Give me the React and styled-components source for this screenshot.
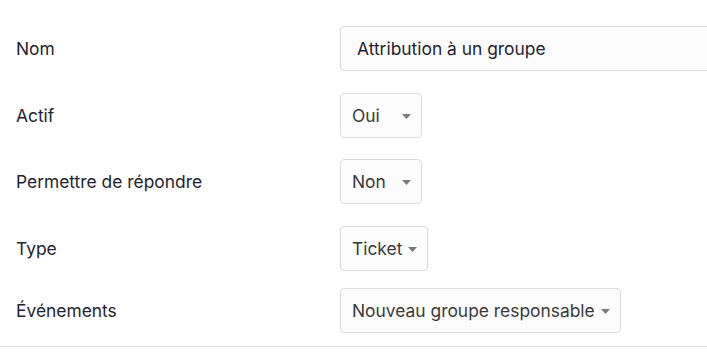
import React from "react"
import styled, { createGlobalStyle } from "styled-components"

const GlobalStyle = createGlobalStyle`
  body {
    margin: 0;
    background: #ffffff;
    font-family: Inter, "Noto Sans", sans-serif;
  }
`

const fields = [
  { label: "Nom", kind: "input", value: "Attribution à un groupe" },
  { label: "Actif", kind: "select", value: "Oui" },
  { label: "Permettre de répondre", kind: "select", value: "Non" },
  { label: "Type", kind: "select", value: "Ticket", tight: true },
  { label: "Événements", kind: "select", value: "Nouveau groupe responsable" },
]

const Caret = () => (
  <svg width="9" height="5" viewBox="0 0 9 5" aria-hidden="true">
    <path d="M0 0h9L4.5 5z" fill="#7a7a7a" />
  </svg>
)

const App = () => (
  <>
    <GlobalStyle />
    <Form>
      {fields.map((f) => (
        <Row key={f.label} tight={f.tight}>
          <Label>{f.label}</Label>
          {f.kind === "input" ? (
            <TextInput>{f.value}</TextInput>
          ) : (
            <Select>
              <span>{f.value}</span>
              <Caret />
            </Select>
          )}
        </Row>
      ))}
    </Form>
    <Divider />
  </>
)

const Form = styled.div`
  padding-top: 26px;
  overflow: hidden;
`

const Row = styled.div`
  display: grid;
  grid-template-columns: 340px 1fr;
  align-items: center;
  margin-bottom: ${({ tight }) => (tight ? "17px" : "21.5px")};

  &:last-child {
    margin-bottom: 13px;
  }
`

const Label = styled.div`
  padding-left: 16px;
  font-size: 17.4px;
  color: #1f2430;
`

const Control = styled.div`
  box-sizing: border-box;
  height: 45px;
  border: 1px solid #dcdcdc;
  border-radius: 4px;
  background: #fcfcfc;
  font-size: 17.4px;
  display: flex;
  align-items: center;
  white-space: nowrap;
`

const TextInput = styled(Control)`
  padding: 0 16px;
  margin-right: -12px;
  color: #1f2430;
`

const Select = styled(Control)`
  justify-self: start;
  min-width: 82px;
  padding: 0 10px 0 11px;
  gap: 6px;
  justify-content: space-between;
  color: #3a3a3a;

  svg {
    margin-top: 2px;
  }
`

const Divider = styled.hr`
  margin: 0;
  border: 0;
  border-top: 1px solid #e3e3e3;
`

export default App
